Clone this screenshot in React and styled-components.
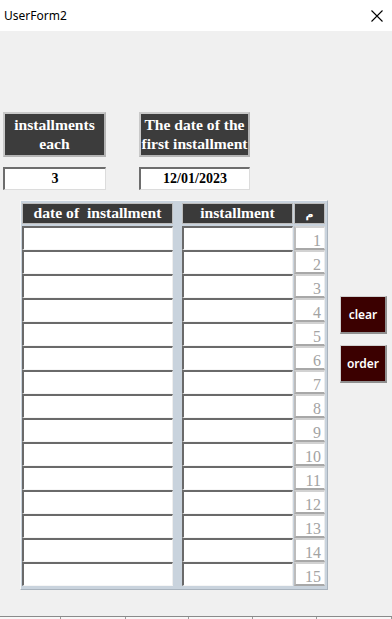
import React from "react";
import styled, { createGlobalStyle } from "styled-components";

const Global = createGlobalStyle`
  html, body { margin: 0; padding: 0; background: #f0f0f0; }
  body { width: 392px; height: 619px; overflow: hidden; }
  * { box-sizing: border-box; }
`;

const Window = styled.div`
  width: 392px;
  height: 619px;
  display: flex;
  flex-direction: column;
  background: #f0f0f0;
  position: relative;
`;

const TitleBar = styled.div`
  height: 31px;
  background: #ffffff;
  display: flex;
  align-items: center;
  justify-content: space-between;
  padding: 0 6px 0 4px;
  font-family: "Noto Sans", "Open Sans", sans-serif;
  font-size: 12px;
  color: #000;
`;

const Close = styled.svg`
  width: 12px;
  height: 12px;
  margin-right: 3px;
`;

const TopRow = styled.div`
  display: flex;
  gap: 33px;
  padding: 81px 0 0 3px;
`;

const Field = styled.div`
  display: flex;
  flex-direction: column;
  gap: 10px;
  width: ${(p) => p.$w}px;
`;

const LabelBox = styled.div`
  height: 45px;
  background: #3c3c3c;
  border: 2px solid #c9c9c9;
  border-right-color: #b4b4b4;
  border-bottom-color: #b4b4b4;
  color: #fff;
  font-family: "Liberation Serif", "Times New Roman", serif;
  font-weight: bold;
  font-size: 15.6px;
  line-height: 19px;
  text-align: center;
  display: flex;
  align-items: center;
  justify-content: center;
  padding-bottom: 1px;
  white-space: nowrap;
`;

const ValueBox = styled.div`
  height: 23px;
  background: #fff;
  border-top: 2px solid #6d6d6d;
  border-left: 2px solid #6d6d6d;
  border-bottom: 1px solid #dcdcdc;
  border-right: 1px solid #dcdcdc;
  font-family: "Liberation Serif", "Times New Roman", serif;
  font-weight: bold;
  font-size: 14px;
  text-align: center;
  line-height: 19px;
  color: #000;
`;

const Main = styled.div`
  display: flex;
  align-items: flex-start;
  padding: 10px 0 0 20px;
`;

const Panel = styled.div`
  width: 308px;
  height: 390px;
  background: #c9d3dd;
  border-left: 1px solid #f8f8f8;
  border-top: 1px solid #f8f8f8;
  border-right: 1px solid #a9b3bd;
  border-bottom: 1px solid #a9b3bd;
  display: flex;
  padding: 2px 0 0 1px;
`;

const Column = styled.div`
  display: flex;
  flex-direction: column;
  width: ${(p) => p.$w}px;
  margin-left: ${(p) => p.$ml || 0}px;
`;

const Header = styled.div`
  height: 21px;
  background: #3a3a3a;
  border: 1px solid #bdbdbd;
  color: #fff;
  font-family: "Liberation Serif", "Times New Roman", serif;
  font-weight: bold;
  font-size: 15.6px;
  line-height: 18px;
  text-align: center;
  margin-bottom: 2px;
  white-space: pre;
`;

const MeemHeader = styled(Header)`
  font-family: "DejaVu Sans", sans-serif;
  font-size: 11px;
  line-height: 22px;
`;

const Cell = styled.div`
  height: 24px;
  background: #fff;
  border-top: 2px solid #6a6a6a;
  border-left: 2px solid #6a6a6a;
  border-bottom: 1px solid #f6f6f6;
  border-right: 1px solid #eeeeee;
`;

const NumCell = styled.div`
  height: 24px;
  background: #fff;
  border-top: 2px solid #d2d2d2;
  border-left: 2px solid #bcbcbc;
  border-bottom: 2px solid #a8a8a8;
  border-right: 1px solid #ececec;
  color: #a3a3a3;
  font-family: "Liberation Serif", "Times New Roman", serif;
  font-size: 16px;
  line-height: 26px;
  text-align: right;
  padding-right: 3px;
  overflow: hidden;
`;

const Buttons = styled.div`
  display: flex;
  flex-direction: column;
  gap: 11px;
  margin: 96px 0 0 12px;
`;

const Btn = styled.button`
  width: 47px;
  height: 38px;
  background: #3b0000;
  border: 1px solid #d0d0d0;
  border-right: 2px solid #8f8f8f;
  border-bottom: 2px solid #8f8f8f;
  color: #fff;
  font-family: "Noto Sans", "Open Sans", sans-serif;
  font-weight: 600;
  font-size: 12px;
  padding: 0;
  cursor: pointer;
`;

const Footer = styled.div`
  position: absolute;
  left: 0;
  right: 0;
  top: 616px;
  height: 3px;
  border-top: 1px solid #8a8a8a;
  display: grid;
  grid-template-columns: 61px 65px 63px 64px 64px 1fr;
`;

const FooterCell = styled.div`
  border-right: 1px solid #9a9a9a;
  background: #f7f7f7;
`;

const rows = Array.from({ length: 15 }, (_, i) => i + 1);

export default function App() {
  return (
    <Window>
      <Global />
      <TitleBar>
        <span>UserForm2</span>
        <Close viewBox="0 0 12 12">
          <path d="M0.5 0.5 L11.5 11.5 M11.5 0.5 L0.5 11.5" stroke="#000" strokeWidth="1.1" />
        </Close>
      </TitleBar>
      <TopRow>
        <Field $w={103}>
          <LabelBox>
            installments
            <br />
            each
          </LabelBox>
          <ValueBox>3</ValueBox>
        </Field>
        <Field $w={111}>
          <LabelBox>
            The date of the
            <br />
            first installment
          </LabelBox>
          <ValueBox>12/01/2023</ValueBox>
        </Field>
      </TopRow>
      <Main>
        <Panel>
          <Column $w={151}>
            <Header>{"date of  installment"}</Header>
            {rows.map((r) => (
              <Cell key={r} />
            ))}
          </Column>
          <Column $w={111} $ml={9}>
            <Header>installment</Header>
            {rows.map((r) => (
              <Cell key={r} />
            ))}
          </Column>
          <Column $w={31} $ml={1}>
            <MeemHeader>م</MeemHeader>
            {rows.map((r) => (
              <NumCell key={r}>{r}</NumCell>
            ))}
          </Column>
        </Panel>
        <Buttons>
          <Btn>clear</Btn>
          <Btn>order</Btn>
        </Buttons>
      </Main>
      <Footer>
        <FooterCell />
        <FooterCell />
        <FooterCell />
        <FooterCell />
        <FooterCell />
        <FooterCell />
      </Footer>
    </Window>
  );
}
